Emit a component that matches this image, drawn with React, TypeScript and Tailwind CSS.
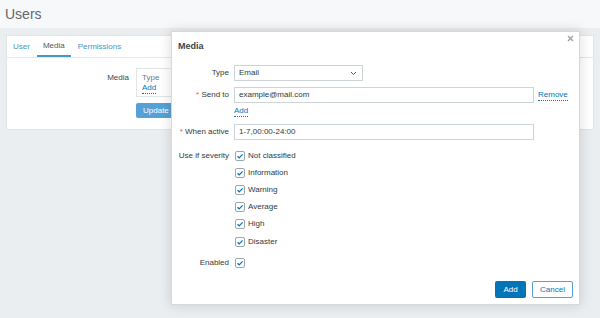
import React from "react";

function Check() {
  return (
    <span className="w-[10px] h-[10px] border border-[#9aa7b0] rounded-[2px] bg-white flex items-center justify-center shrink-0">
      <svg width="8" height="8" viewBox="0 0 8 8">
        <path d="M1.5 4.2 L3.2 5.8 L6.6 2.3" fill="none" stroke="#0275b8" strokeWidth="1.2" />
      </svg>
    </span>
  );
}

const severities = ["Not classified", "Information", "Warning", "Average", "High", "Disaster"];

export default function App() {
  return (
    <div className="relative w-[600px] h-[318px] overflow-hidden bg-[#ebeef0] font-['Liberation_Sans',Arial,sans-serif] text-[8px] text-[#2f3a40]">
      <div className="h-[28px] bg-[#f7f8f9] flex items-center pl-[5px]">
        <span className="text-[14px] text-[#5f686e]">Users</span>
      </div>
      <div className="mx-[6px] mt-[7px] h-[95px] bg-white border border-[#dfe4e7]">
        <div className="flex h-[22px] border-b border-[#e3e7ea] gap-[1px]">
          <div className="px-[6px] flex items-center text-[#4796c4]">User</div>
          <div className="px-[6px] flex items-center text-[#4f5a61] border-b-2 border-[#4796c4]">Media</div>
          <div className="px-[6px] flex items-center text-[#4796c4]">Permissions</div>
        </div>
        <div className="flex mt-[10px]">
          <div className="w-[122px] text-right pt-[4px] text-[#3c474d]">Media</div>
          <div className="ml-[7px] flex flex-col">
            <div className="w-[300px] h-[29px] border border-[#dfe4e7] pl-[5px] pt-[3px] flex flex-col">
              <span className="text-[#6d7a82] leading-[11px]">Type</span>
              <span className="text-[#0275b8] leading-[10px] border-b border-dotted border-[#0275b8] self-start">Add</span>
            </div>
            <div className="mt-[6px] h-[15px] w-[50px] bg-[#55a1d7] rounded-[2px] text-white flex items-center pl-[7px]">Update</div>
          </div>
        </div>
      </div>

      <div className="absolute left-[171px] top-[31px] w-[409px] h-[274px] bg-white border border-[#d3d9dd] shadow-[0_0_12px_rgba(0,0,0,0.15)] flex flex-col">
        <div className="absolute right-[5px] top-[3px] text-[#9aa3a8]">
          <svg width="7" height="7" viewBox="0 0 7 7">
            <path d="M1 1 L6 6 M6 1 L1 6" stroke="#9aa3a8" strokeWidth="1.4" />
          </svg>
        </div>
        <div className="mt-[8px] ml-[6px] h-[12px] leading-[12px] text-[9px] font-bold text-[#3a454b]">Media</div>

        <div className="flex items-center mt-[13px] h-[16px]">
          <div className="w-[57px] text-right">Type</div>
          <div className="ml-[5px] w-[129px] h-[16px] border border-[#cdd4d8] flex items-center justify-between pl-[4px] pr-[5px]">
            <span>Email</span>
            <svg width="7" height="5" viewBox="0 0 7 5">
              <path d="M1 1 L3.5 3.5 L6 1" fill="none" stroke="#4f5a61" strokeWidth="1" />
            </svg>
          </div>
        </div>

        <div className="flex items-center mt-[6px] h-[16px]">
          <div className="w-[57px] text-right"><span className="text-[#e45959]">*</span> Send to</div>
          <div className="ml-[5px] w-[300px] h-[16px] border border-[#cdd4d8] flex items-center pl-[4px]">example@mail.com</div>
          <span className="ml-[4px] text-[#0275b8] border-b border-dotted border-[#0275b8] leading-[10px]">Remove</span>
        </div>

        <div className="flex items-center mt-[1px] h-[14px]">
          <div className="w-[57px]" />
          <span className="ml-[5px] text-[#0275b8] border-b border-dotted border-[#0275b8] leading-[10px]">Add</span>
        </div>

        <div className="flex items-center mt-[6px] h-[16px]">
          <div className="w-[57px] text-right"><span className="text-[#e45959]">*</span> When active</div>
          <div className="ml-[5px] w-[300px] h-[16px] border border-[#cdd4d8] flex items-center pl-[4px]">1-7,00:00-24:00</div>
        </div>

        <div className="flex mt-[7px]">
          <div className="w-[57px] text-right h-[17.2px] flex items-center justify-end">Use if severity</div>
          <div className="ml-[6px] flex flex-col">
            {severities.map((s) => (
              <div key={s} className="h-[17.2px] flex items-center gap-[3px]">
                <Check />
                <span>{s}</span>
              </div>
            ))}
          </div>
        </div>

        <div className="flex items-center mt-[4px] h-[17px]">
          <div className="w-[57px] text-right">Enabled</div>
          <div className="ml-[6px]"><Check /></div>
        </div>

        <div className="flex justify-end gap-[6px] mt-[10px] pr-[6px]">
          <div className="w-[31px] h-[17px] bg-[#0275b8] rounded-[2px] text-white flex items-center justify-center">Add</div>
          <div className="w-[41px] h-[17px] border border-[#5a9fd0] rounded-[2px] text-[#0275b8] bg-white flex items-center justify-center">Cancel</div>
        </div>
      </div>
    </div>
  );
}
